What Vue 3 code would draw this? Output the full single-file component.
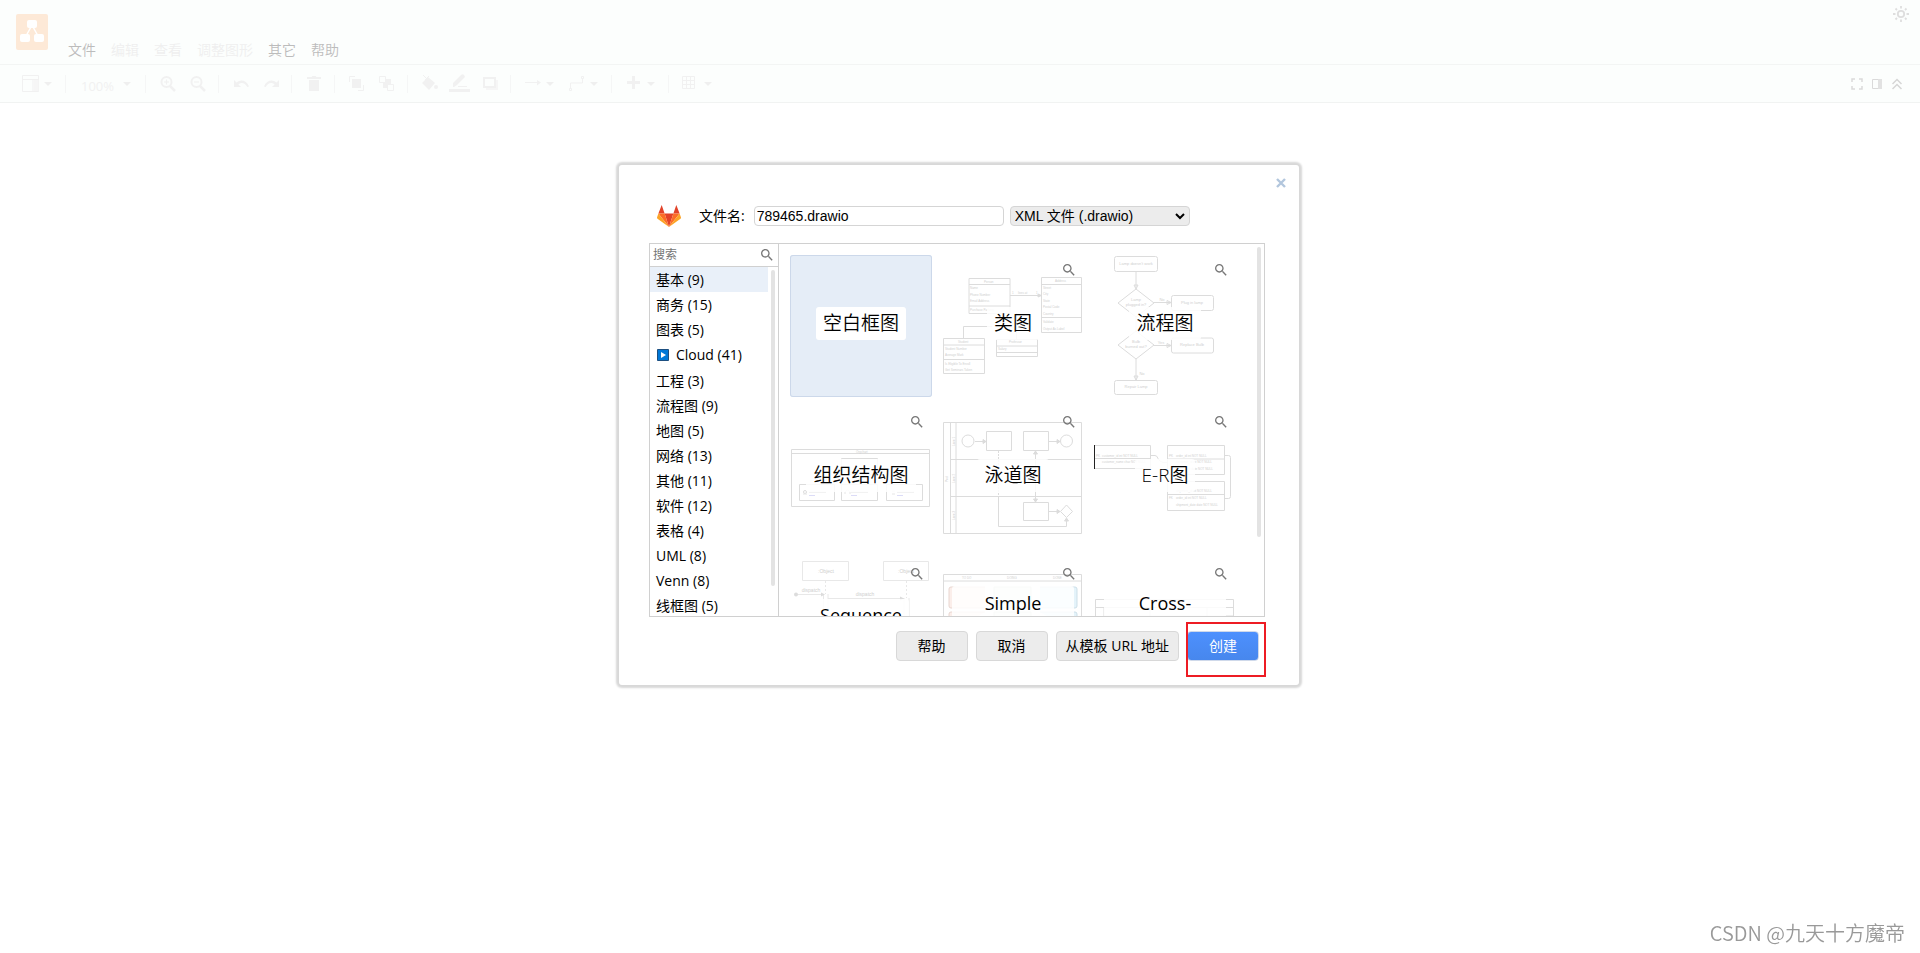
<script setup>
import { ref } from 'vue'

const menus = [
  { label: '文件' },
  { label: '编辑', disabled: true },
  { label: '查看', disabled: true },
  { label: '调整图形', disabled: true },
  { label: '其它' },
  { label: '帮助' },
]

const toolGroups = [
  [{ id: 'format', title: '视图', caret: true }],
  [{ id: 'zoom', title: '缩放', text: '100%', caret: true }],
  [{ id: 'zoomin', title: '放大' }, { id: 'zoomout', title: '缩小' }],
  [{ id: 'undo', title: '撤销' }, { id: 'redo', title: '重做' }],
  [{ id: 'delete', title: '删除' }],
  [{ id: 'front', title: '移至最前' }, { id: 'back', title: '移至最后' }],
  [{ id: 'fill', title: '填充颜色' }, { id: 'line', title: '线条颜色' }, { id: 'shadow', title: '阴影' }],
  [{ id: 'connect', title: '连接', caret: true }, { id: 'waypoint', title: '航点', caret: true }],
  [{ id: 'insert', title: '插入', caret: true }],
  [{ id: 'table', title: '表格', caret: true }],
]

const categories = [
  '基本 (9)', '商务 (15)', '图表 (5)', 'Cloud (41)', '工程 (3)', '流程图 (9)', '地图 (5)',
  '网络 (13)', '其他 (11)', '软件 (12)', '表格 (4)', 'UML (8)', 'Venn (8)', '线框图 (5)',
]
const category = ref(0)

const templates = [
  { id: 'blank', label: '空白框图' },
  { id: 'class', label: '类图' },
  { id: 'flow', label: '流程图' },
  { id: 'org', label: '组织结构图' },
  { id: 'swim', label: '泳道图' },
  { id: 'er', label: 'E-R图' },
  { id: 'sequence', label: 'Sequence', size: 'latin two' },
  { id: 'simple', label: 'Simple', size: 'latin three' },
  { id: 'cross', label: 'Cross-', size: 'latin three' },
]
const selected = ref('blank')
const filename = ref('789465.drawio')
const search = ref('')
</script>

<template>
  <div class="page">
    <header class="menubar">
      <svg class="logo" viewBox="0 0 32 36" aria-hidden="true">
        <rect width="32" height="36" rx="2" fill="#fde9d7" />
        <path d="M15.500 12 10 22M16.500 12 22 22" stroke="#fff" stroke-width="1.500" />
        <rect x="11" y="6" width="10" height="8" rx="2" fill="#fff" />
        <rect x="4" y="20" width="10" height="8" rx="2" fill="#fff" />
        <rect x="18" y="20" width="10" height="8" rx="2" fill="#fff" />
      </svg>
      <nav class="menus">
        <button v-for="m in menus" :key="m.label" type="button" :disabled="m.disabled">{{ m.label }}</button>
      </nav>
      <button class="theme" type="button" aria-label="外观">
        <svg width="16" height="16" viewBox="0 0 16 16" fill="none" stroke="#dedede" stroke-width="1.800">
          <circle cx="8" cy="8" r="3.200" />
          <path d="M8 0v2.500M8 13.500V16M0 8h2.500M13.500 8H16M2.500 2.500l1.500 1.500M12 12l1.500 1.500M13.500 2.500 12 4M4 12l-1.500 1.500" />
        </svg>
      </button>
    </header>

    <div class="toolbar">
      <div v-for="(group, g) in toolGroups" :key="g" class="group">
        <button v-for="t in group" :key="t.id" type="button" disabled :aria-label="t.title" :class="[t.id, { drop: t.caret }]">
          <span v-if="t.text" class="percent">{{ t.text }}</span>
          <svg v-else class="tool" width="30" height="30" viewBox="0 0 30 30" fill="none" stroke="#f1f1f1">
            <g v-if="t.id === 'format'"><path d="M6.500 6.500h16v16h-16zM6.500 10.500h16M17 10.500v12" /><path d="M17.500 11h5v11h-5z" fill="#f6f6f6" stroke="none" /></g>
            <g v-else-if="t.id === 'zoomin' || t.id === 'zoomout'" stroke-width="2">
              <circle cx="13.500" cy="13" r="5" /><path d="m17 17 5 5" stroke-width="2.500" /><path d="M11 13h5" stroke-width="1.200" /><path v-if="t.id === 'zoomin'" d="M13.500 10.500v5" stroke-width="1.200" />
            </g>
            <g v-else-if="t.id === 'undo'" fill="#f1f1f1" stroke="none"><path d="M8 11v7h7l-2.600-2.600C15.600 13 19 14 21.300 18l1.700-.5C20.500 11 14.500 10 10.500 13.500z" /></g>
            <g v-else-if="t.id === 'redo'" fill="#f1f1f1" stroke="none"><path d="M23 11v7h-7l2.600-2.600C15.400 13 12 14 9.700 18L8 17.500C10.500 11 16.500 10 20.500 13.500z" /></g>
            <g v-else-if="t.id === 'delete'" fill="#f1f1f1" stroke="none"><path d="M8 8h4.500l1-1h3l1 1H22v2H8zM10 11h10v11H10z" /></g>
            <g v-else-if="t.id === 'front'"><path d="M13 7.500H7.500V13M16 21.500h5.500V16" /><path d="M10 10h9v9h-9z" fill="#f1f1f1" stroke="none" /></g>
            <g v-else-if="t.id === 'back'"><path d="M11 10h8v9h-8z" fill="#f1f1f1" stroke="none" /><path d="M7.500 7.500h6v6h-6zM15.500 15.500h6v6h-6z" fill="#fcfefd" /></g>
            <g v-else-if="t.id === 'fill'"><path d="m7 14 6-6 7 6-6 7z" fill="#f1f1f1" stroke="none" /><path d="m8 6 7 7M10 11l4-4" /><circle cx="21" cy="18" r="2" fill="#f1f1f1" stroke="none" /></g>
            <g v-else-if="t.id === 'line'" fill="#f1f1f1" stroke="none"><path d="M8 18v-4l8-8q3-2 4 2l-8 8-3 2zM13 17h9v1h-9zM4 20h21v3H4z" /></g>
            <g v-else-if="t.id === 'shadow'"><path d="M11 11h12v10H11z" fill="#f6f6f6" stroke="none" /><path d="M9 9h11v9H9z" fill="#fcfefd" stroke-width="2" /></g>
            <g v-else-if="t.id === 'connect'"><path d="M7 13.500h12" /><path d="m19 11 4 2.500-4 3z" fill="#f1f1f1" stroke="none" /></g>
            <g v-else-if="t.id === 'waypoint'"><path d="M8.500 19v-5h12V10M7.500 19.500h2v2h-2zM19.500 7.500h2v2h-2z" /></g>
            <g v-else-if="t.id === 'insert'"><path d="M8 13.500h13M14.500 7v13" stroke-width="3" /></g>
            <g v-else><path d="M6.500 7.500h12v12h-12zM6.500 11.500h12M6.500 15.500h12M10.500 7.500v12M14.500 7.500v12" /></g>
          </svg>
          <i v-if="t.caret" class="caret"></i>
        </button>
      </div>
      <div class="window-tools">
        <button type="button" aria-label="全屏"><svg width="12" height="12" viewBox="0 0 12 12" fill="none" stroke="#dadada" stroke-width="1.500"><path d="M1 4V1h3M8 1h3v3M11 8v3H8M4 11H1V8" /></svg></button>
        <button type="button" aria-label="格式"><svg width="12" height="12" viewBox="0 0 12 12"><path d="M1.500 1.500h9v9h-9z" fill="none" stroke="#dadada" /><path d="M7 1h4v10H7z" fill="#e2e2e2" /></svg></button>
        <button type="button" aria-label="收起"><svg width="12" height="12" viewBox="0 0 12 12" fill="none" stroke="#d6d6d6" stroke-width="1.500"><path d="m1.500 6 4.500-4.500L10.500 6M1.500 11 6 6.500l4.500 4.500" /></svg></button>
      </div>
    </div>

    <main>
      <form class="dialog" role="dialog" @submit.prevent>
        <button class="close" type="button" aria-label="关闭">
          <svg width="10" height="10" viewBox="0 0 10 10" stroke="#b2c6dd" stroke-width="2.400"><path d="m1 1 8 8M9 1 1 9" /></svg>
        </button>
        <div class="file-row">
          <svg class="gitlab" width="24" height="22" viewBox="0 0 24 22" aria-hidden="true">
            <path d="M12 22 7.600 8.500h8.800zM4.700 0 1.400 8.500h6.200zM19.300 0l3.300 8.500h-6.200z" fill="#e24329" />
            <path d="M12 22 1.400 8.500h6.200zM12 22 22.600 8.500h-6.200z" fill="#fc6d26" />
            <path d="M12 22 1.400 8.500 0 12.600q0 .8.500 1.200zM12 22 22.600 8.500l1.400 4.100q0 .8-.5 1.200z" fill="#fca326" />
          </svg>
          <label for="filename">文件名:</label>
          <input id="filename" v-model="filename" type="text" />
          <div class="select">
            <select aria-label="文件类型"><option>XML 文件 (.drawio)</option></select>
            <svg width="10" height="7" viewBox="0 0 10 7" fill="none" stroke="#000" stroke-width="2"><path d="m1 1 4 4 4-4" /></svg>
          </div>
        </div>

        <div class="browser">
          <aside>
            <div class="search">
              <input v-model="search" type="text" placeholder="搜索" aria-label="搜索" />
              <svg width="16" height="16" viewBox="0 0 24 24" fill="#777"><path d="M15.500 14h-.79l-.28-.27C15.410 12.590 16 11.110 16 9.500 16 5.910 13.090 3 9.500 3S3 5.910 3 9.500 5.910 16 9.500 16c1.610 0 3.090-.59 4.230-1.570l.27.28v.79l5 4.990L20.490 19zm-6 0C7.010 14 5 11.990 5 9.500S7.010 5 9.500 5 14 7.010 14 9.500 11.990 14 9.500 14z" /></svg>
            </div>
            <div class="categories">
              <ul>
                <li v-for="(c, i) in categories" :key="c">
                  <button type="button" :class="{ active: category === i, cloud: i === 3 }" @click="category = i">
                    <svg v-if="i === 3" width="12" height="12" viewBox="0 0 12 12"><path d="M.5.500h11v11H.5z" fill="#0078d7" stroke="#1d4f80" /><path d="m4 3 5 3-5 3z" fill="#fff" /></svg>
                    {{ c }}
                  </button>
                </li>
              </ul>
              <span class="thumb-bar"></span>
            </div>
          </aside>

          <section class="gallery">
            <div class="tiles">
              <div v-for="t in templates" :key="t.id" class="tile" :class="{ selected: selected === t.id }">
                <button class="pick" type="button" @click="selected = t.id">
                  <svg class="preview" viewBox="0 0 142 142" fill="none" stroke="#dcdcdc" aria-hidden="true">
                    <g v-if="t.id === 'class'">
                      <path d="M27 23.500h41v35H27zM27 29.500h41M27 51h41M99.500 22.500h40v55h-40zM99.500 29.500h40M99.500 62.500h40M1.500 83.500h41v35h-41zM1.500 90h41M1.500 104.500h41M54.500 84.500h41v17h-41zM54.500 91h41M54.500 97.500h41M68 40.500h31M21.500 83.500v-12H50M74.500 84V58" />
                      <path d="m96 39 3.500 1.500L96 42z" fill="#dcdcdc" />
                      <g class="t3">
                        <text x="42" y="28">Person</text><text x="28" y="34">Name</text><text x="28" y="41">Phone Number</text><text x="28" y="47">Email Address</text><text x="28" y="56">Purchase Parking</text>
                        <text x="113" y="27">Address</text><text x="101" y="34">Street</text><text x="101" y="40">City</text><text x="101" y="47">State</text><text x="101" y="53">Postal Code</text><text x="101" y="60">Country</text><text x="101" y="68">Validate</text><text x="101" y="75">Output As Label</text>
                        <text x="16" y="88">Student</text><text x="3" y="95">Student Number</text><text x="3" y="101">Average Mark</text><text x="3" y="110">Is Eligible To Enroll</text><text x="3" y="116">Get Seminars Taken</text>
                        <text x="67" y="88">Professor</text><text x="56" y="95">Salary</text><text x="76" y="39">lives at</text><text x="70" y="39">1</text><text x="94" y="39">1</text>
                      </g>
                    </g>
                    <g v-else-if="t.id === 'flow'">
                      <g><rect x="20.500" y="1.500" width="43" height="15" rx="2" /><rect x="77.500" y="40.500" width="42" height="15" rx="2" /><rect x="77.500" y="83" width="42" height="15" rx="2" /><rect x="20.500" y="125.500" width="43" height="14" rx="2" /></g>
                      <path d="M42 17v17l18 14-18 14-18-14 18-14M60 47.500h17M42 62v14l18 14-18 14-18-14 18-14M60 90.500h17M42 104v21" />
                      <path d="m40 30 2 4 2-4zM73 45.500l4 2-4 2zM73 88.500l4 2-4 2zM40 121l2 4 2-4z" />
                      <g class="t4"><text x="42" y="10">Lamp doesn't work</text><text x="42" y="46">Lamp</text><text x="42" y="51">plugged in?</text><text x="98" y="49">Plug in lamp</text><text x="42" y="88">Bulb</text><text x="42" y="93">burned out?</text><text x="98" y="91">Replace Bulb</text><text x="42" y="133">Repair Lamp</text><text x="68" y="46">No</text><text x="67" y="89">Yes</text><text x="48" y="120">No</text></g>
                    </g>
                    <g v-else-if="t.id === 'org'">
                      <path d="M1.500 42.500h138v57H1.500zM1.500 46.500h138M51.500 51.500h36v16h-36zM9.500 77.500h35v16h-35zM51.500 77.500h36v16h-36zM96.500 77.500h36v16h-36z" />
                      <g stroke-width="1"><circle cx="15" cy="85" r="1.500" /><path d="M13 87h4M55 87v-2q2.500-4 5 0v2M102 87h3M102 84h3M19 85h17M61 85h17M107 85h17" stroke="#e6e6e6" /><path d="M19 88.500h6M61 88.500h6M107 88.500h6" stroke="#dcdcf7" /></g>
                      <text class="t3" x="66" y="45.500">Orgchart</text>
                    </g>
                    <g v-else-if="t.id === 'swim'">
                      <path d="M1.500 15.500h138v111H1.500zM8.500 15.500v111M14 15.500v111M8.500 52.500h131M8.500 89.500h131M44.500 24.500h25v19h-25zM81.500 24.500h25v19h-25zM81.500 95.500h25v18h-25zM33 34.500h11M106 34.500h12M106 104.500h12M56.500 89v30.500h68V111M93.500 44v51M124.500 98l6 6.500-6 6-6-6z" />
                      <path d="M56.500 44v45" stroke-dasharray="2 1" /><circle cx="26" cy="34" r="6" /><circle cx="124.500" cy="34" r="6" />
                      <path d="m41 32.500 3 2-3 2zM115 32.500l3 2-3 2zM115 102.500l3 2-3 2zM91.500 47l2-3 2 3zM91.500 92l2 3 2-3zM122.500 114l2-3 2 3z" fill="#dcdcdc" />
                      <g class="t3"><text transform="translate(6 75) rotate(-90)">Pool</text><text transform="translate(13 39) rotate(-90)">Lane 1</text><text transform="translate(13 76) rotate(-90)">Lane 2</text><text transform="translate(13 113) rotate(-90)">Lane 3</text></g>
                    </g>
                    <g v-else-if="t.id === 'er'">
                      <path d="M.5 38.500h56v23H.5zM.5 51.500h56M73.500 38.500h57v29h-57zM73.500 52h57M73.500 74.500h57v29h-57zM73.500 87.500h57M130.500 48.500h4q2 0 2 2v39q0 2-2 2h-4M57 48.500h4q2 0 3 3t5 4h4" />
                      <path d="M.5 38v24" stroke="#222" />
                      <g class="t3"><text x="2" y="50">PK</text><text x="8" y="50">customer_id int NOT NULL</text><text x="8" y="56">customer_name char NOT NULL</text><text x="75" y="50">PK</text><text x="82" y="50">order_id int NOT NULL</text><text x="82" y="56">customer_id int NOT NULL</text><text x="82" y="63">order_date date NOT NULL</text><text x="82" y="85">shipment_id int NOT NULL</text><text x="75" y="92">FK</text><text x="82" y="92">order_id int NOT NULL</text><text x="82" y="99">shipment_date date NOT NULL</text></g>
                    </g>
                    <g v-else-if="t.id === 'sequence'" stroke="#e8e8e8">
                      <path d="M12.500 2.500h46v19h-46zM93.500 2.500h45v19h-45zM6 35.500h28M38 39.500h76M33.500 35v40M38 35v40M114 39v30M119 39v30" /><path d="M35.500 22v13M116.500 22v17" stroke-dasharray="2 2" />
                      <g fill="#dcdcdc" stroke="none"><circle cx="6" cy="35.500" r="2" /><path d="m31 33.500 4 2-4 2zM110 37.500l4 2-4 2z" /></g>
                      <g class="t5"><text x="36" y="14">:Object</text><text x="116" y="14">:Object</text><text x="21" y="33">dispatch</text><text x="75" y="37">dispatch</text></g>
                    </g>
                    <g v-else-if="t.id === 'simple'">
                      <path d="M1.500 15.500h138V142H1.500zM1.500 22h138" />
                      <g><path d="M43 28H9q-2 0-2 2v17q0 2 2 2h34M43 53H9q-2 0-2 2v20" stroke="#e9d6d0" fill="#fbeeea" /><path d="M52 28h37v21H52zM52 53h37v22H52z" stroke="#d5dbd7" fill="#eef5f0" /><path d="M98 28h35q2 0 2 2v17q0 2-2 2H98M98 53h35q2 0 2 2v20" stroke="#cddfe8" fill="#e4f3fa" /></g>
                      <g class="t3"><text x="20" y="20">TO DO</text><text x="65" y="20">DOING</text><text x="111" y="20">DONE</text></g>
                    </g>
                    <path v-else-if="t.id === 'cross'" d="M1.500 40.500h138V142H1.500zM1.500 48.500h138M10 48.500V142M56 48.500V142M113 48.500V142M10 57h129" />
                  </svg>
                  <span class="label" :class="t.size">{{ t.label }}</span>
                </button>
                <button v-if="t.id !== 'blank'" class="magnify" type="button" :aria-label="'预览 ' + t.label">
                  <svg width="16" height="16" viewBox="0 0 24 24" fill="#777"><path d="M15.500 14h-.79l-.28-.27C15.410 12.590 16 11.110 16 9.500 16 5.910 13.090 3 9.500 3S3 5.910 3 9.500 5.910 16 9.500 16c1.610 0 3.090-.59 4.230-1.570l.27.28v.79l5 4.990L20.490 19zm-6 0C7.010 14 5 11.990 5 9.500S7.010 5 9.500 5 14 7.010 14 9.500 11.990 14 9.500 14z" /></svg>
                </button>
              </div>
            </div>
            <span class="thumb-bar"></span>
          </section>
        </div>

        <div class="actions">
          <button type="button">帮助</button>
          <button type="button">取消</button>
          <button type="button">从模板 URL 地址</button>
          <div class="marked"><button class="primary" type="submit">创建</button></div>
        </div>
      </form>
    </main>

    <p class="credit">CSDN @九天十方魔帝</p>
  </div>
</template>

<style>
body { background: #fff; }
</style>

<style scoped>
.page {
  min-height: 100vh;
  font: 14px/20px "Open Sans", "Noto Sans CJK SC", sans-serif;
  color: #000;
}
*, *::before, *::after { box-sizing: border-box; }
button, input, select { margin: 0; padding: 0; border: 0; background: none; font: inherit; color: inherit; }
svg { display: block; flex: none; }

.menubar {
  display: flex;
  align-items: flex-start;
  height: 65px;
  padding: 14px 11px 0 16px;
  background: #fcfefd;
  border-bottom: 1px solid #f3f5f4;
}
.logo { width: 32px; height: 36px; }
.menus { display: flex; gap: 15px; margin: 26px auto 0 20px; }
.menus button { color: #bcbcbc; font-weight: 350; }
.menus button:disabled { color: #efefef; }
.theme { margin-top: -8px; }

.toolbar {
  display: flex;
  align-items: center;
  height: 38px;
  padding: 0 17px 0 16px;
  background: #fcfefd;
  border-bottom: 1px solid #f1f3f2;
}
.group { display: flex; align-items: center; }
.group + .group::before { content: ""; width: 1px; height: 18px; margin: 0 7px 0 5px; background: #f5f6f6; }
.group button { display: flex; align-items: center; width: 30px; height: 30px; }
.group button.drop { width: 44px; }
.group button.zoom { width: 67px; padding-left: 8px; gap: 11px; }
.percent { padding-top: 4px; color: #f1f1f1; font-size: 13px; }
.caret { margin-left: -2px; border: 4px solid transparent; border-top-color: #efefef; border-bottom: 0; }
.window-tools { display: flex; gap: 8px; margin-left: auto; }

main { display: flex; justify-content: center; padding: 62px 2px 0 0; }
.dialog {
  position: relative;
  width: 100%;
  max-width: 680px;
  padding: 41px 34px 24px 30px;
  background: #fff;
  border-radius: 3px;
  box-shadow: 0 0 2px 3px #d8d8d8;
}
.close { position: absolute; top: 13px; right: 13px; }

.file-row { display: flex; align-items: center; height: 20px; margin-bottom: 17px; padding-left: 8px; }
.file-row label { margin: 0 9px 0 18px; white-space: nowrap; }
.file-row input {
  width: 250px;
  height: 20px;
  margin-right: 6px;
  padding: 0 2px;
  border: 1px solid #d5d5d5;
  border-radius: 4px;
  font: 14px/18px "Liberation Sans", "Noto Sans CJK SC", sans-serif;
}
.select { position: relative; width: 180px; }
.select select {
  display: block;
  width: 100%;
  height: 20px;
  padding: 0 4px;
  border: 1px solid #d5d5d5;
  border-radius: 4px;
  background: #ececec;
  appearance: none;
  font: 14px/18px "Liberation Sans", "Noto Sans CJK SC", sans-serif;
}
.select svg { position: absolute; right: 5px; top: 7px; pointer-events: none; }

.browser { display: flex; height: 374px; border: 1px solid #d0d0d0; }
aside { display: flex; flex-direction: column; width: 129px; border-right: 1px solid #d0d0d0; }
.search { display: flex; align-items: center; height: 23px; padding: 0 3px; border-bottom: 1px solid #d0d0d0; }
.search input { flex: 1; min-width: 0; height: 20px; font-size: 12px; outline: 0; }
.search input::placeholder { color: #757575; opacity: 1; }
.categories { position: relative; flex: 1; min-height: 0; overflow: hidden; }
ul { margin: 0; padding: 0 10px 0 0; list-style: none; }
li button { display: flex; align-items: center; gap: 7px; width: 100%; height: 25px; padding: 0 0 0 6px; text-align: left; white-space: nowrap; }
li button.cloud { height: 26px; padding: 0 0 0 7px; }
li button.active { background: #e9f0f9; }
.thumb-bar { position: absolute; top: 3px; right: 3px; width: 4px; height: 316px; border-radius: 2px; background: #e3e3e3; }

.gallery { position: relative; flex: 1; min-width: 0; overflow: hidden; padding: 11px; }
.gallery .thumb-bar { height: 290px; }
.tiles { display: grid; grid-template-columns: repeat(3, 142px); gap: 10px; }
.tile { position: relative; height: 142px; border-radius: 3px; }
.tile.selected { background: #e5edf7; box-shadow: inset 0 0 0 1px #ccd8ea; }
.pick { position: relative; display: flex; align-items: center; justify-content: center; width: 100%; height: 142px; padding-bottom: 5px; }
.preview { position: absolute; inset: 0; width: 142px; height: 142px; }
.preview text { fill: #cfcfcf; stroke: none; font-family: "Liberation Sans", sans-serif; }
.t3 { font-size: 3px; }
.t4 { font-size: 4px; text-anchor: middle; }
.t5 { font-size: 5px; text-anchor: middle; }
.label { position: relative; padding: 4px 7px; border-radius: 3px; background: rgba(255, 255, 255, 0.85); font-size: 19px; font-weight: 350; line-height: 25px; white-space: nowrap; }
.selected .label { background: #fff; }
.label.latin { font-size: 18px; font-weight: 400; }
.label.two { min-height: 58px; }
.label.three { min-width: 122px; min-height: 83px; padding-top: 5px; }
.magnify { position: absolute; top: 7px; right: 7px; }

.actions { display: flex; justify-content: flex-end; gap: 8px; margin: 14px 6px 0 0; }
.actions button { min-width: 72px; height: 30px; padding: 0 9px; border: 1px solid #d8d8d8; border-radius: 4px; background: #ececec; white-space: nowrap; }
.actions .primary { border-color: #cfd9ea; background: linear-gradient(#4d90fe, #4787ed); color: #fff; }
.marked { position: relative; }
.marked::after { content: ""; position: absolute; inset: -9px -7px -16px -1px; border: 2px solid #ed1c24; pointer-events: none; }

.credit {
  position: fixed;
  right: 15px;
  bottom: 7px;
  margin: 0;
  font: 20px/26px "Noto Sans CJK SC", sans-serif;
  font-weight: 350;
  color: #999;
}
</style>
